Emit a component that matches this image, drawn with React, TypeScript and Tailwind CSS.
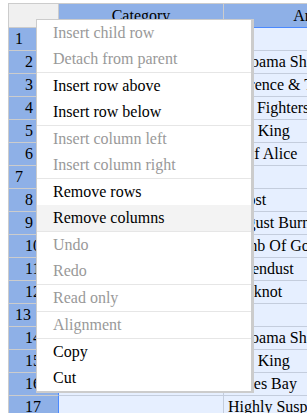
type Row = { n: number; parent: boolean; category: string; artist: string };

const ROWS: Row[] = [
  { n: 1, parent: true, category: 'Best Rock Performance', artist: '' },
  { n: 2, parent: false, category: '', artist: 'Alabama Shakes' },
  { n: 3, parent: false, category: '', artist: 'Florence & The Machine' },
  { n: 4, parent: false, category: '', artist: 'Foo Fighters' },
  { n: 5, parent: false, category: '', artist: 'Elle King' },
  { n: 6, parent: false, category: '', artist: 'Wolf Alice' },
  { n: 7, parent: true, category: 'Best Metal Performance', artist: '' },
  { n: 8, parent: false, category: '', artist: 'Ghost' },
  { n: 9, parent: false, category: '', artist: 'August Burns Red' },
  { n: 10, parent: false, category: '', artist: 'Lamb Of God' },
  { n: 11, parent: false, category: '', artist: 'Sevendust' },
  { n: 12, parent: false, category: '', artist: 'Slipknot' },
  { n: 13, parent: true, category: 'Best Rock Song', artist: '' },
  { n: 14, parent: false, category: '', artist: 'Alabama Shakes' },
  { n: 15, parent: false, category: '', artist: 'Elle King' },
  { n: 16, parent: false, category: '', artist: 'James Bay' },
  { n: 17, parent: false, category: '', artist: 'Highly Suspect' },
];

type MenuItem = { label: string; disabled?: boolean; active?: boolean } | 'sep';

const MENU: MenuItem[] = [
  { label: 'Insert child row', disabled: true },
  { label: 'Detach from parent', disabled: true },
  'sep',
  { label: 'Insert row above' },
  { label: 'Insert row below' },
  'sep',
  { label: 'Insert column left', disabled: true },
  { label: 'Insert column right', disabled: true },
  'sep',
  { label: 'Remove rows' },
  { label: 'Remove columns', active: true },
  'sep',
  { label: 'Undo', disabled: true },
  { label: 'Redo', disabled: true },
  'sep',
  { label: 'Read only', disabled: true },
  'sep',
  { label: 'Alignment', disabled: true },
  'sep',
  { label: 'Copy' },
  { label: 'Cut' },
];

function ContextMenu() {
  return (
    <div className="absolute left-[36px] top-[19px] w-[218px] bg-white border-t border-l border-r-[3px] border-b-[2px] border-[#ccc]">
      {MENU.map((m, i) =>
        m === 'sep' ? (
          <div key={i} className="h-px bg-[#e6e6e6]" />
        ) : (
          <div
            key={i}
            className={
              'h-[26px] flex items-center pl-[16px] whitespace-nowrap ' +
              (m.disabled ? 'text-[#999]' : 'text-black') +
              (m.active ? ' bg-[#f3f3f3]' : '')
            }
          >
            {m.label}
          </div>
        )
      )}
    </div>
  );
}

export default function App() {
  return (
    <div className="relative w-[307px] h-[413px] overflow-hidden bg-white [font-family:'Liberation_Serif',serif] text-[16px] text-black">
      <div className="pl-[8px] pt-[3px]">
        <div className="w-max border-l border-t border-[#ccc]">
          {/* column headers */}
          <div className="flex h-[24px]">
            <div className="w-[50px] bg-[#f0f0f0] border-b border-r border-[#ccc]" />
            <div className="w-[165px] bg-[#8eb0e7] border-r border-r-[#ccc] border-b border-b-[#4b89ff] flex items-center justify-center">
              Category
            </div>
            <div className="w-[176px] bg-[#8eb0e7] border-r border-r-[#ccc] border-b border-b-[#4b89ff] flex items-center justify-center">
              Artist
            </div>
          </div>

          {ROWS.map(r => (
            <div key={r.n} className="flex h-[23px]">
              <div
                className={
                  'w-[50px] bg-[#8eb0e7] border-b border-b-[#ccc] border-r border-r-[#4b89ff] flex items-center ' +
                  (r.parent ? 'pl-[6px]' : 'pl-[16px]')
                }
              >
                {r.n}
              </div>
              <div className="w-[165px] bg-[#e6efff] border-b border-r border-[#c4cddd] px-[4px] flex items-center whitespace-nowrap overflow-hidden">
                {r.category}
              </div>
              <div className="w-[176px] bg-[#e6efff] border-b border-r border-[#c4cddd] px-[4px] flex items-center whitespace-nowrap overflow-hidden">
                {r.artist}
              </div>
            </div>
          ))}
        </div>
      </div>

      <ContextMenu />
    </div>
  );
}
